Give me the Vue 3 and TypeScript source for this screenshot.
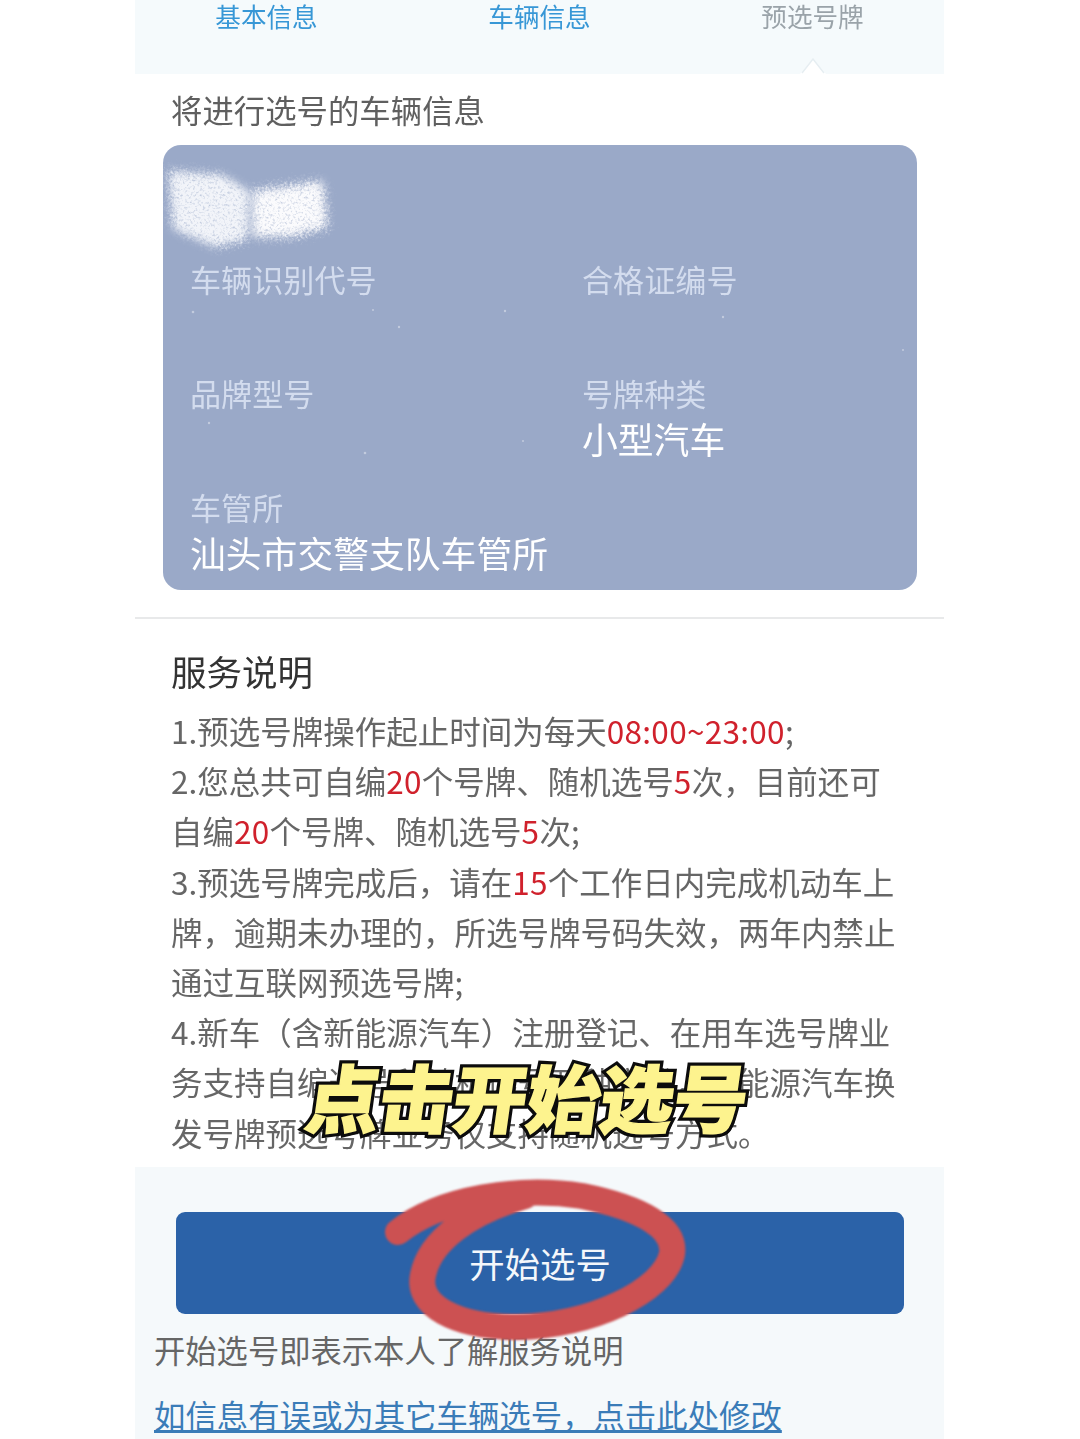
<script setup lang="ts">
const tabs = [
  { label: '基本信息', done: true },
  { label: '车辆信息', done: true },
  { label: '预选号牌', done: false },
]
const caption = '点击开始选号'
const specks: [number, number, number][] = [
  [30, 167, 1.3], [236, 182, 1.2], [342, 166, 1.2], [560, 172, 1.2], [740, 205, 1],
  [46, 278, 1.2], [202, 308, 1.3], [360, 296, 1], [425, 300, 1], [210, 165, 1],
]
</script>

<template>
  <div class="page">
    <main class="column">
      <nav class="tabs">
        <span v-for="t in tabs" :key="t.label" class="tab" :class="{ done: t.done }">{{ t.label }}</span>
        <svg class="caret" width="30" height="18" viewBox="0 0 30 18">
          <path d="M2 18 L15 2 L28 18 Z" fill="#fff" />
          <path d="M4 17 L15 3 L26 17" fill="none" stroke="#e6eef2" stroke-width="1.5" />
        </svg>
      </nav>

      <section class="vehicle">
        <h2 class="vehicle-title">将进行选号的车辆信息</h2>
        <div class="card">
          <svg class="specks" width="754" height="445" viewBox="0 0 754 445">
            <circle v-for="(s, i) in specks" :key="i" :cx="s[0]" :cy="s[1]" :r="s[2]" fill="#fff" opacity="0.4" />
          </svg>
          <div class="plate">
            <svg width="180" height="100" viewBox="0 0 180 100">
              <defs>
                <filter id="smudge" x="-20%" y="-20%" width="140%" height="140%">
                  <feGaussianBlur in="SourceGraphic" stdDeviation="4" result="soft" />
                  <feTurbulence type="fractalNoise" baseFrequency="0.4" numOctaves="3" seed="7" result="n" />
                  <feDisplacementMap in="soft" in2="n" scale="12" result="d" />
                  <feColorMatrix in="n" type="matrix" values="0 0 0 0 1  0 0 0 0 1  0 0 0 0 1  1.4 0 0 0 0.28" result="grain" />
                  <feComposite in="d" in2="grain" operator="in" />
                </filter>
              </defs>
              <g filter="url(#smudge)">
                <path d="M6 14 L60 18 L86 34 L84 82 L52 90 L10 72 Z" fill="#f2f4f9" />
                <path d="M90 34 L160 24 L164 70 L128 80 L90 80 Z" fill="#fbfbfd" />
              </g>
            </svg>
          </div>
          <div class="fields">
            <div class="field"><span class="label">车辆识别代号</span></div>
            <div class="field"><span class="label">合格证编号</span></div>
            <div class="field"><span class="label">品牌型号</span></div>
            <div class="field"><span class="label">号牌种类</span><span class="value">小型汽车</span></div>
            <div class="field"><span class="label">车管所</span><span class="value">汕头市交警支队车管所</span></div>
          </div>
        </div>
      </section>

      <section class="notes">
        <h2 class="notes-title">服务说明</h2>
        <p>1.预选号牌操作起止时间为每天<em>08:00~23:00</em>;</p>
        <p>2.您总共可自编<em>20</em>个号牌、随机选号<em>5</em>次，目前还可自编<em>20</em>个号牌、随机选号<em>5</em>次;</p>
        <p>3.预选号牌完成后，请在<em>15</em>个工作日内完成机动车上牌，逾期未办理的，所选号牌号码失效，两年内禁止通过互联网预选号牌;</p>
        <p>4.新车（含新能源汽车）注册登记、在用车选号牌业务支持自编选号和随机选号两种方式，新能源汽车换发号牌预选号牌业务仅支持随机选号方式。</p>
      </section>

      <footer class="actions">
        <button class="start" type="button">开始选号</button>
        <p class="consent">开始选号即表示本人了解服务说明</p>
        <a class="edit" href="#">如信息有误或为其它车辆选号，点击此处修改</a>
      </footer>
    </main>

    <div class="caption" :data-text="caption">{{ caption }}</div>
    <svg class="scribble" width="1080" height="1439" viewBox="0 0 1080 1439">
      <path
        d="M398 1232 C440 1198 520 1186 582 1196 C642 1208 676 1228 672 1254 C664 1292 590 1326 517 1327 C455 1327 416 1305 423 1275 C430 1240 470 1212 525 1196"
        fill="none" stroke="#cc5152" stroke-width="26" stroke-linecap="round" stroke-linejoin="round"
      />
    </svg>
  </div>
</template>

<style scoped>
.page {
  position: relative;
  width: 1080px;
  height: 1439px;
  overflow: hidden;
  background: #fff;
  font-family: "Noto Sans CJK SC", "Noto Sans", sans-serif;
}
.column {
  width: 809px;
  height: 1439px;
  margin-left: 135px;
  display: flex;
  flex-direction: column;
  filter: blur(0.45px);
}
.tabs {
  position: relative;
  height: 74px;
  flex: none;
  display: grid;
  grid-template-columns: repeat(3, 273px);
  justify-content: center;
  background: #f5fafc;
}
.tab {
  height: 36px;
  line-height: 32px;
  text-align: center;
  font-size: 25.6px;
  color: #9aa3a9;
}
.tab.done { color: #3797d6; }
.caret {
  position: absolute;
  left: 663px;
  bottom: 0;
}
.vehicle {
  flex: none;
  height: 543px;
  border-bottom: 2px solid #e8e9ea;
  padding: 0 28px;
}
.vehicle-title {
  margin: 0;
  height: 71px;
  padding-left: 8px;
  line-height: 72px;
  font-size: 31.4px;
  font-weight: 400;
  color: #5f5f5f;
}
.card {
  position: relative;
  width: 754px;
  height: 445px;
  border-radius: 18px;
  background: #9aa9c8;
  overflow: hidden;
}
.specks {
  position: absolute;
  left: 0;
  top: 0;
}
.plate {
  height: 109px;
  padding-top: 12px;
  box-sizing: border-box;
}
.plate svg { display: block; }
.fields {
  display: grid;
  grid-template-columns: 392px 1fr;
  grid-auto-rows: 114px;
  padding-left: 27px;
}
.field {
  display: flex;
  flex-direction: column;
}
.label {
  height: 50px;
  line-height: 50px;
  font-size: 31.1px;
  color: #d3dcee;
}
.value {
  height: 46px;
  line-height: 40px;
  font-size: 35.8px;
  color: #fff;
}
.notes {
  flex: none;
  height: 548px;
  box-sizing: border-box;
  padding: 25px 46px 0 36px;
  overflow: hidden;
}
.notes-title {
  margin: 0 0 7px;
  height: 54px;
  line-height: 54px;
  font-size: 35.5px;
  font-weight: 400;
  color: #333;
}
.notes p {
  margin: 0;
  font-size: 31.5px;
  line-height: 50.2px;
  color: #666;
}
.notes em {
  font-style: normal;
  letter-spacing: 0.3px;
  color: #d0212c;
}
.actions {
  flex: 1;
  background: #f5f9fb;
  padding: 45px 40px 0 19px;
  display: flex;
  flex-direction: column;
  align-items: flex-start;
}
.start {
  width: 728px;
  height: 102px;
  margin-left: 22px;
  padding: 0 0 2px;
  flex: none;
  border: 0;
  border-radius: 9px;
  background: #2b62a8;
  color: #f4f7fb;
  font-family: inherit;
  font-size: 35.4px;
}
.consent {
  margin: 11px 0 0;
  height: 50px;
  line-height: 50px;
  font-size: 31.3px;
  color: #666;
}
.edit {
  margin-top: 15px;
  line-height: 50px;
  font-size: 31.4px;
  color: #3a7cb8;
  text-decoration: underline;
  text-underline-offset: 2px;
  white-space: nowrap;
}
.caption {
  position: absolute;
  left: 303px;
  top: 1045px;
  width: 450px;
  text-align: center;
  font-size: 73.5px;
  line-height: 100px;
  font-weight: 900;
  color: #0c0c0c;
  -webkit-text-stroke: 8px #0c0c0c;
  transform: skewX(-8deg);
  text-shadow: 3px 3px 0 #0c0c0c;
  white-space: nowrap;
}
.caption::after {
  content: attr(data-text);
  position: absolute;
  left: 0;
  top: 0;
  width: 100%;
  color: #fdf38e;
  -webkit-text-stroke: 1.5px #fdf38e;
  text-shadow: none;
}
.scribble {
  position: absolute;
  left: 0;
  top: 0;
  pointer-events: none;
  filter: blur(0.8px);
}
</style>

<style>
html, body { margin: 0; background: #fff; }
</style>
